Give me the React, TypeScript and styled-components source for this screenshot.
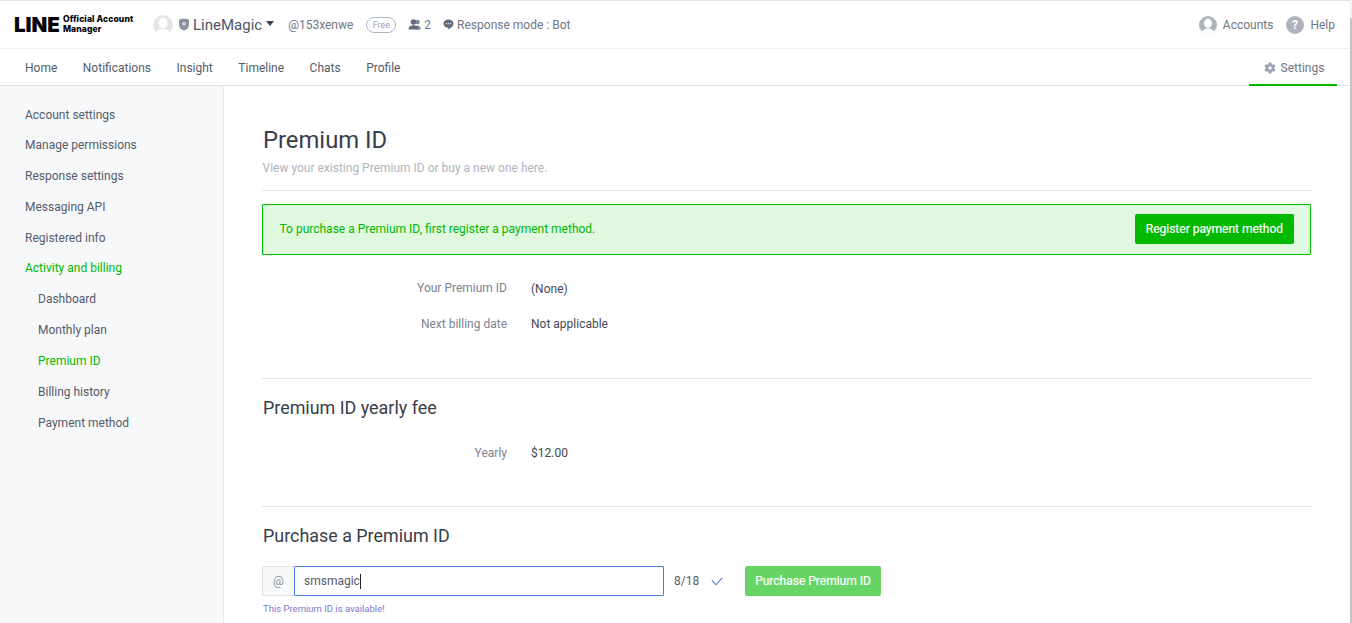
import React from "react";
import styled, { createGlobalStyle } from "styled-components";

const Global = createGlobalStyle`
  html, body { margin: 0; padding: 0; height: 100%; overflow: hidden; background: #fff; }
  body { font-family: Roboto, "Liberation Sans", sans-serif; color: #555b6b; }
  * { box-sizing: border-box; }
`;

const Page = styled.div`width: 1352px; height: 623px; display: flex; overflow: hidden;`;
const Frame = styled.div`
  width: 1350px; height: 623px; flex: none; display: flex; flex-direction: column; overflow: hidden;
  border-top: 1px solid #dfe1e4;
`;
const ScrollTrack = styled.div`width: 2px; height: 623px; flex: none; padding-top: 18px; background: #f3f3f3;`;
const ScrollThumb = styled.div`height: 100%; background: #c4c4c4;`;
const TopBar = styled.header`
  height: 48px; flex: none; display: flex; align-items: center; padding: 0 15px 0 14px;
  border-bottom: 1px solid #eceef0; font-size: 12px; color: #6e7687;
`;
const Logo = styled.div`display: flex; align-items: center; gap: 3px; width: 139px; color: #000;`;
const LogoWord = styled.span`font: 900 20.5px/20px "Inter", Roboto, sans-serif; letter-spacing: 0;`;
const LogoSub = styled.span`font: 800 8.6px/9.5px "Inter", Roboto, sans-serif; letter-spacing: 0.1px; white-space: nowrap;`;
const Avatar = styled.span<{ $size: number; $bg: string }>`
  width: ${p => p.$size}px; height: ${p => p.$size}px; border-radius: 50%; background: ${p => p.$bg};
  display: inline-flex; align-items: center; justify-content: center; overflow: hidden; flex: none;
`;
const AccountName = styled.span`font-size: 15px; color: #4e5568; margin-left: 3px;`;
const Caret = styled.span`
  width: 0; height: 0; border-left: 4.5px solid transparent; border-right: 4.5px solid transparent;
  border-top: 5px solid #3c4152; margin: 0 0 3px 4px;
`;
const Handle = styled.span`margin-left: 14px; color: #6e7687;`;
const Badge = styled.span`
  margin-left: 13px; height: 16px; width: 30px; border: 1px solid #b0b5bf; border-radius: 8px;
  font-size: 9px; line-height: 14px; text-align: center; color: #9aa0ad;
`;
const Meta = styled.span<{ $ml: number }>`
  display: inline-flex; align-items: center; gap: 3px; margin-left: ${p => p.$ml}px; color: #6e7687;
`;
const Spacer = styled.div`flex: 1;`;
const RightLink = styled.span<{ $ml: number }>`
  display: inline-flex; align-items: center; gap: 6px; margin-left: ${p => p.$ml}px; color: #6e7687;
`;
const NavBar = styled.nav`
  height: 37px; flex: none; display: flex; align-items: stretch; padding: 0 13px 0 25px;
  border-bottom: 1px solid #dfe1e4; font-size: 12px; color: #555b6b;
`;
const NavItem = styled.a`display: flex; align-items: center; margin-right: 25.5px; padding-top: 2px;`;
const SettingsTab = styled.a`
  margin-left: auto; width: 88px; display: flex; align-items: center; justify-content: center; gap: 5px;
  border-bottom: 2px solid #00b900; height: 37px; color: #6e7687; padding: 2px 0 0 2px;
`;
const Body = styled.div`flex: 1; display: flex; min-height: 0;`;
const Sidebar = styled.aside`
  width: 224px; flex: none; background: #f7f8fa; border-right: 1px solid #e6e8eb;
  padding-top: 13.8px; font-size: 12px; color: #555b6b;
`;
const SideItem = styled.div<{ $active?: boolean }>`
  height: 30.7px; line-height: 30px; padding-left: 25px;
  color: ${p => (p.$active ? "#00b900" : "#555b6b")};
`;
const SubList = styled.div`margin-top: -0.1px;`;
const SubItem = styled.div<{ $active?: boolean }>`
  height: 30.95px; line-height: 30px; padding-left: 38px;
  color: ${p => (p.$active ? "#00b900" : "#555b6b")};
`;
const Main = styled.main`flex: 1; padding: 38px 39px 0 38px; min-width: 0;`;
const Title = styled.h1`margin: 0; padding-left: 1px; font-size: 23.8px; line-height: 32px; font-weight: 400; color: #383d4a;`;
const Subtitle = styled.p`margin: 4px 0 0; padding-left: 0.5px; font-size: 12px; line-height: 16px; color: #b0b4bd;`;
const Rule = styled.hr<{ $mt: number }>`margin: ${p => p.$mt}px 0 0; border: 0; border-top: 1px solid #e3e5e8;`;
const Notice = styled.div`
  margin-top: 13px; height: 51px; display: flex; align-items: center; justify-content: space-between;
  background: #e0f7e0; border: 1px solid #00b900; border-radius: 1px; padding: 0 16px 1px 16.5px;
  color: #00b900; font-size: 12px;
`;
const GreenButton = styled.button<{ $muted?: boolean }>`
  border: 0; border-radius: 2px; color: #fff; font: 400 12px Roboto, sans-serif;
  background: ${p => (p.$muted ? "#66d566" : "#00b900")}; height: 30px; padding: 0 ${p => (p.$muted ? 10 : 11)}px;
  white-space: nowrap; -webkit-text-stroke: 0.2px #fff;
`;
const InfoRow = styled.div<{ $mt: number }>`
  display: grid; grid-template-columns: 245px 1fr; column-gap: 24px; margin-top: ${p => p.$mt}px;
  font-size: 12px; line-height: 16px;
`;
const InfoLabel = styled.span`text-align: right; color: #7d8390;`;
const InfoValue = styled.span<{ $drop?: boolean }>`color: #434857; padding-top: ${p => (p.$drop ? 1 : 0)}px;`;
const SectionTitle = styled.h2<{ $mt: number }>`
  margin: ${p => p.$mt}px 0 0; padding-left: 1px; font-size: 17.9px; line-height: 24px; font-weight: 400; color: #383d4a;
`;
const IdRow = styled.div`display: flex; align-items: center; margin-top: 18px; height: 30px;`;
const AtPrefix = styled.span`
  width: 32px; height: 30px; background: #f7f8fa; border: 1px solid #dfe1e4; border-right: 0;
  display: flex; align-items: center; justify-content: center; font-size: 12px; color: #8b909c;
`;
const IdInput = styled.div`
  width: 370px; height: 30px; border: 1px solid #4a7bdc; border-radius: 1px; padding-left: 9px;
  display: flex; align-items: center; font-size: 12px; color: #555b6b;
`;
const Cursor = styled.span`width: 1px; height: 15px; background: #222;`;
const Counter = styled.span`margin-left: 10px; font-size: 12px; color: #555b6b;`;
const CheckWrap = styled.span`margin: 0 22px 0 12px; display: inline-flex;`;
const Hint = styled.p`margin: 7px 0 0; padding-left: 1px; font-size: 9.5px; line-height: 12px; color: #7a78d0;`;

const Person = ({ c }: { c: string }) => (
  <svg viewBox="0 0 20 20" width="100%" height="100%">
    <ellipse cx="10" cy="8" rx="4.4" ry="5.2" fill={c} />
    <path d="M2.5 20c.5-4.5 4-6 7.5-6s7 1.500 7.5 6z" fill={c} />
  </svg>
);
const Shield = () => (
  <svg width="12" height="13" viewBox="0 0 12 13" style={{ marginLeft: 5 }}>
    <path d="M1 1.500 6 .5l5 1v5.500c0 3-2.500 4.600-5 5.600C3.500 11.600 1 10 1 7z" fill="#8c92a0" />
    <circle cx="6" cy="5.800" r="1.800" fill="#d5d8dd" />
  </svg>
);
const Users = () => (
  <svg width="13" height="11" viewBox="0 0 13 11">
    <circle cx="9.500" cy="3" r="2.300" fill="#838a9a" />
    <path d="M7 10.500c0-3 1-4 2.500-4s3.300 1 3.300 4z" fill="#838a9a" />
    <circle cx="5.500" cy="3" r="2.800" fill="#656c80" />
    <path d="M.5 10.500c0-3 2.300-4.300 5-4.300s5 1.300 5 4.300z" fill="#656c80" />
  </svg>
);
const Bubble = () => (
  <svg width="11" height="11" viewBox="0 0 11 11">
    <path d="M5.500 .5c2.800 0 5 1.800 5 4.200S8 9 5 10.500c.3-1 .2-1.500.1-1.700C2.500 8.600.5 6.900.5 4.700.5 2.300 2.700.5 5.500.5z" fill="#656c80" />
    <circle cx="3.500" cy="4.700" r=".6" fill="#fff" />
    <circle cx="5.500" cy="4.700" r=".6" fill="#fff" />
    <circle cx="7.500" cy="4.700" r=".6" fill="#fff" />
  </svg>
);
const Gear = () => (
  <svg width="12" height="12" viewBox="0 0 24 24">
    <path fillRule="evenodd" fill="#9aa0ad" d="M14.500 0h-5l-.7 3.500a9 9 0 0 0-1.800 1L3.600 3.400 1 7.700l2.700 2.300a9 9 0 0 0 0 2l-2.700 2.300 2.600 4.300L7 17.500a9 9 0 0 0 1.800 1l.7 3.500h5l.7-3.500a9 9 0 0 0 1.800-1l3.400 1.100 2.600-4.300-2.700-2.300a9 9 0 0 0 0-2L23 7.700l-2.600-4.300L17 4.500a9 9 0 0 0-1.800-1zM12 7.500a3.500 3.500 0 1 1 0 7 3.500 3.500 0 0 1 0-7z" transform="translate(0 1)" />
  </svg>
);
const Check = () => (
  <svg width="12" height="9" viewBox="0 0 12 9">
    <path d="M.8 3.500 5 7.800 11.200.8" fill="none" stroke="#5a82d8" strokeWidth="1.100" />
  </svg>
);

const nav = ["Home", "Notifications", "Insight", "Timeline", "Chats", "Profile"];
const top: { t: string; active?: boolean }[] = [
  { t: "Account settings" }, { t: "Manage permissions" }, { t: "Response settings" }, { t: "Messaging API" },
  { t: "Registered info" }, { t: "Activity and billing", active: true },
];
const sub: { t: string; active?: boolean }[] = [
  { t: "Dashboard" }, { t: "Monthly plan" }, { t: "Premium ID", active: true }, { t: "Billing history" }, { t: "Payment method" },
];

export default function App() {
  return (
    <Page>
      <Global />
      <Frame>
        <TopBar>
          <Logo>
            <LogoWord>LINE</LogoWord>
            <LogoSub>Official Account<br />Manager</LogoSub>
          </Logo>
          <Avatar $size={20} $bg="#e4e6e9"><Person c="#fff" /></Avatar>
          <Shield />
          <AccountName>LineMagic</AccountName>
          <Caret />
          <Handle>@153xenwe</Handle>
          <Badge>Free</Badge>
          <Meta $ml={12}><Users /> 2</Meta>
          <Meta $ml={12}><Bubble /> Response mode : Bot</Meta>
          <Spacer />
          <RightLink $ml={0}><Avatar $size={18} $bg="#aeb3bc"><Person c="#fff" /></Avatar>Accounts</RightLink>
          <RightLink $ml={13}>
            <Avatar $size={18} $bg="#aeb3bc"><svg width="18" height="18" viewBox="0 0 18 18"><text x="9" y="13" textAnchor="middle" fontSize="12" fontWeight="700" fill="#fff" fontFamily="Roboto">?</text></svg></Avatar>
            Help
          </RightLink>
        </TopBar>
        <NavBar>
          {nav.map(n => <NavItem key={n}>{n}</NavItem>)}
          <SettingsTab><Gear />Settings</SettingsTab>
        </NavBar>
        <Body>
          <Sidebar>
            {top.map(s => <SideItem key={s.t} $active={s.active}>{s.t}</SideItem>)}
            <SubList>
              {sub.map(s => <SubItem key={s.t} $active={s.active}>{s.t}</SubItem>)}
            </SubList>
          </Sidebar>
          <Main>
            <Title>Premium ID</Title>
            <Subtitle>View your existing Premium ID or buy a new one here.</Subtitle>
            <Rule $mt={14} />
            <Notice>
              <span>To purchase a Premium ID, first register a payment method.</span>
              <GreenButton>Register payment method</GreenButton>
            </Notice>
            <InfoRow $mt={25}><InfoLabel>Your Premium ID</InfoLabel><InfoValue $drop>(None)</InfoValue></InfoRow>
            <InfoRow $mt={19}><InfoLabel>Next billing date</InfoLabel><InfoValue>Not applicable</InfoValue></InfoRow>
            <Rule $mt={46} />
            <SectionTitle $mt={17}>Premium ID yearly fee</SectionTitle>
            <InfoRow $mt={25}><InfoLabel>Yearly</InfoLabel><InfoValue>$12.00</InfoValue></InfoRow>
            <Rule $mt={45} />
            <SectionTitle $mt={17}>Purchase a Premium ID</SectionTitle>
            <IdRow>
              <AtPrefix>@</AtPrefix>
              <IdInput>smsmagic<Cursor /></IdInput>
              <Counter>8/18</Counter>
              <CheckWrap><Check /></CheckWrap>
              <GreenButton $muted>Purchase Premium ID</GreenButton>
            </IdRow>
            <Hint>This Premium ID is available!</Hint>
          </Main>
        </Body>
      </Frame>
      <ScrollTrack><ScrollThumb /></ScrollTrack>
    </Page>
  );
}
